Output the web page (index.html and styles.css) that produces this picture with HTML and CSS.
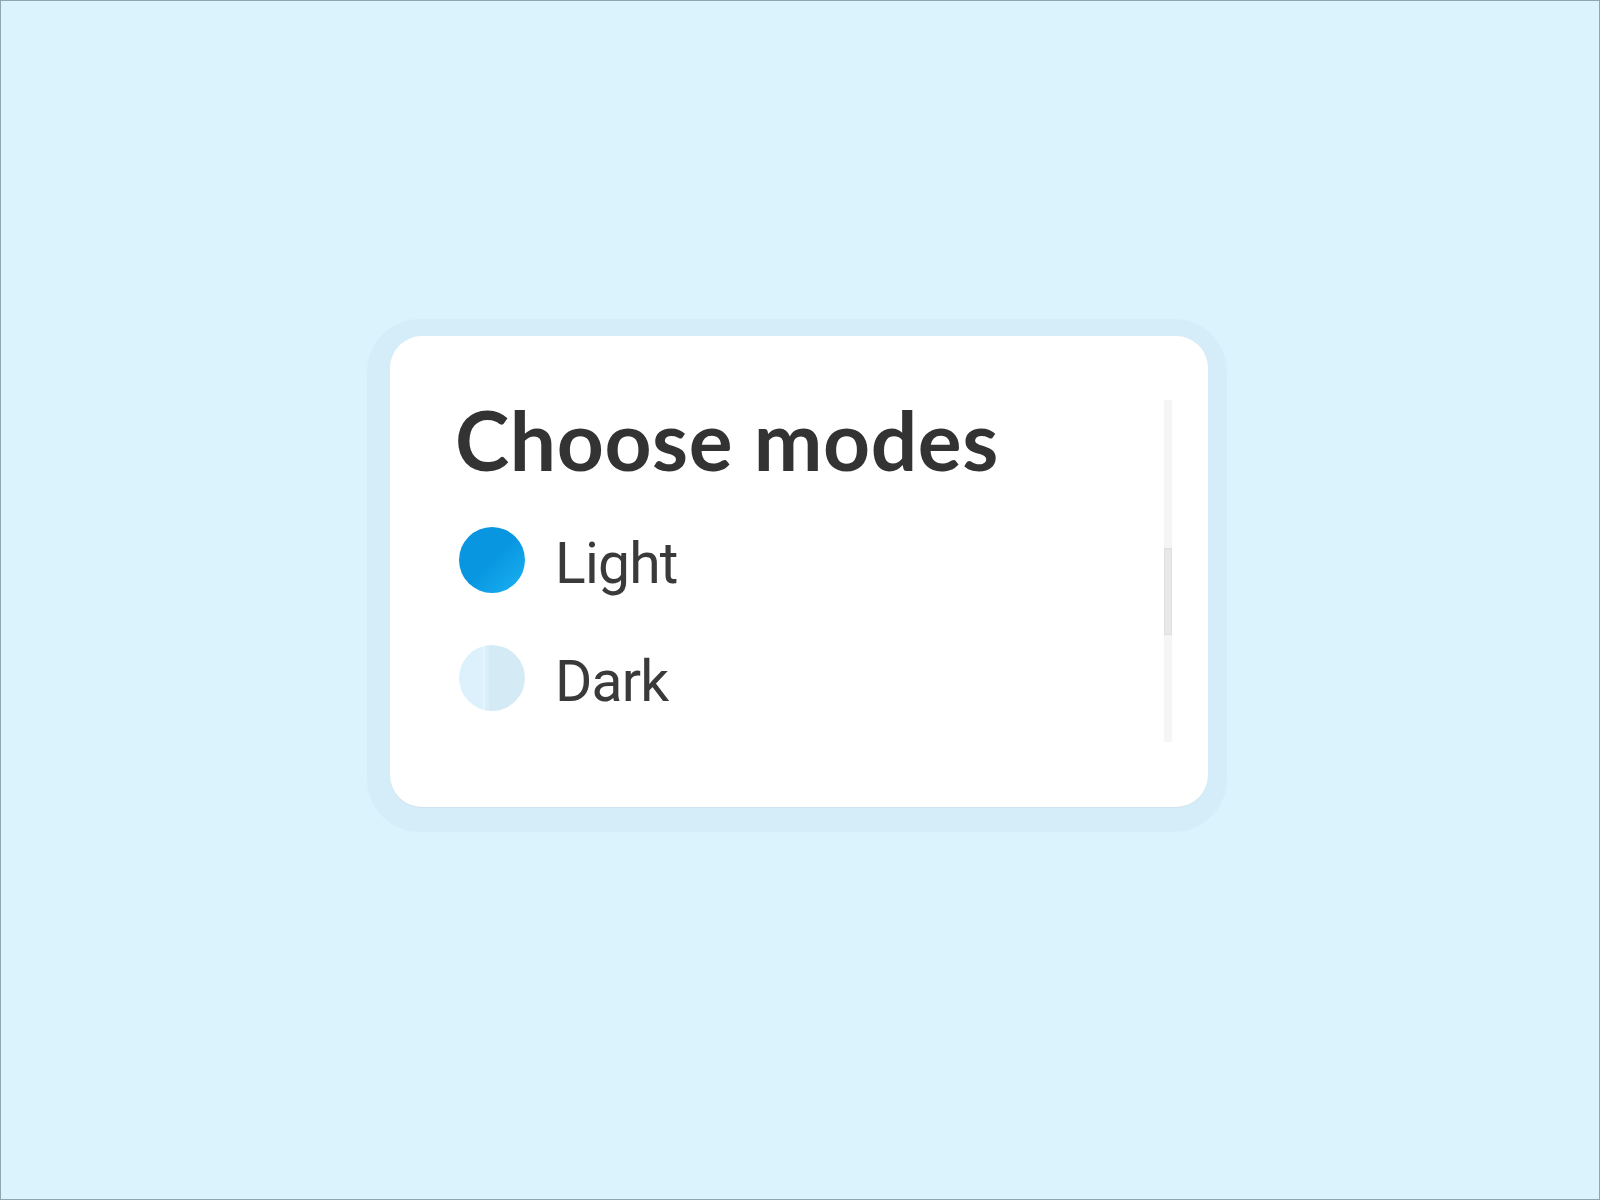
FILE: index.html
```html
<!DOCTYPE html>
<html lang="en">
<head>
  <meta charset="UTF-8">
  <title>Choose modes</title>
  <link rel="stylesheet" href="styles.css">
</head>
<body>
  <div class="stage">
    <div class="card">
      <div class="content">
        <h1 class="title">Choose modes</h1>
        <ul class="modes">
          <li class="mode">
            <span class="dot dot-on"></span>
            <span class="label">Light</span>
          </li>
          <li class="mode">
            <span class="dot dot-off"></span>
            <span class="label">Dark</span>
          </li>
        </ul>
      </div>
      <div class="scrollbar">
        <div class="thumb"></div>
      </div>
    </div>
  </div>
</body>
</html>
```

FILE: styles.css
```css
body {
  margin: 0;
  font-family: Lato, "Noto Sans", sans-serif;
  background-color: #dbf3fd;
}
.stage {
  box-sizing: border-box;
  height: 1200px;
  border: 1px solid #8ea6ae;
  display: flex;
  justify-content: center;
  align-items: flex-start;
  padding-top: 335px;
}
.card {
  box-sizing: border-box;
  width: 818px;
  height: 471px;
  margin-right: 2px;
  background: #ffffff;
  border-radius: 32px;
  box-shadow: 0 1px 0 0 #cfe3ef, -2px 4px 1px 21px #d5edf8;
  display: flex;
  padding: 0 36px 0 63px;
}
.content {
  flex: 1;
  padding-top: 62px;
}
.title {
  margin: 0 0 0 2px;
  font-size: 82px;
  line-height: 1;
  font-weight: 700;
  letter-spacing: 0.6px;
  color: #333333;
}
.modes {
  list-style: none;
  margin: 47px 0 0;
  padding: 0;
  display: flex;
  flex-direction: column;
  gap: 52px;
}
.mode {
  display: flex;
  align-items: center;
  gap: 30px;
  height: 66px;
}
.dot {
  width: 66px;
  height: 66px;
  margin-left: 6px;
  border-radius: 50%;
  flex-shrink: 0;
}
.dot-on {
  background: linear-gradient(135deg, #0a95e0 0%, #0896e1 50%, #1cb2f1 100%);
}
.dot-off {
  background: linear-gradient(90deg, #dcf1fb 0%, #dcf1fb 36%, #e6f5fc 36%, #e6f5fc 40%, #d8eef8 40%, #d8eef8 46%, #d4ebf6 46%, #d4ebf6 100%);
}
.label {
  margin-top: 7px;
  font-family: Roboto, Lato, sans-serif;
  font-size: 57px;
  line-height: 66px;
  font-weight: 400;
  letter-spacing: -0.8px;
  color: #3a3a3a;
}
.scrollbar {
  width: 8px;
  margin: 64px 0 65px;
  background: #f5f5f5;
}
.thumb {
  margin-top: 148px;
  height: 87px;
  background: #e8e8e8;
  border: 1px solid #dedede;
  box-sizing: border-box;
}
```
